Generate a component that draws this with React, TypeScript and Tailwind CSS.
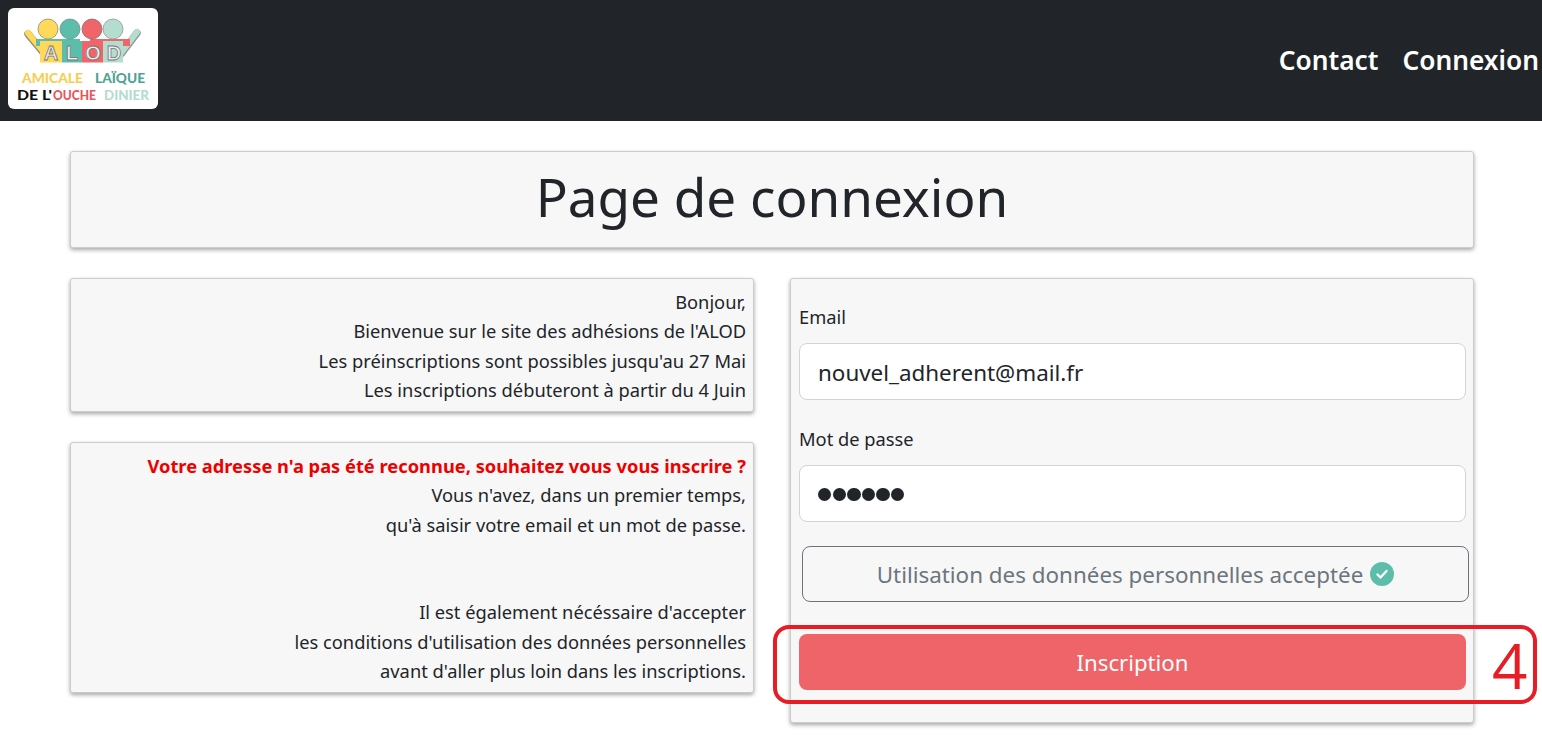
import React from 'react';

const Logo = () => (
  <svg viewBox="0 0 150 101" className="w-full h-full">
    {/* arms */}
    <path d="M20 26 L35 44" stroke="#8f8f80" strokeWidth="7.5" strokeLinecap="round" />
    <path d="M129 25 L113 46" stroke="#8f9a94" strokeWidth="7.5" strokeLinecap="round" />
    <path d="M20 25 L35 43" stroke="#ffd95a" strokeWidth="6" strokeLinecap="round" />
    <path d="M129 24 L113 45" stroke="#b4dccf" strokeWidth="6" strokeLinecap="round" />
    <path d="M28 31 L72 31 L72 38 L28 38 Z" fill="#5cbdaa" />
    <path d="M82 31 L122 31 L122 38 L82 38 Z" fill="#ef6569" />
    {/* bodies */}
    <rect x="32" y="33" width="22" height="21.5" fill="#ffd95a" />
    <rect x="54" y="33" width="20" height="21.5" fill="#5cbdaa" />
    <rect x="74" y="33" width="21" height="21.5" fill="#ef6569" />
    <rect x="95" y="33" width="20" height="21.5" fill="#b4dccf" />
    {/* heads */}
    <circle cx="40" cy="21" r="10" fill="#ffd95a" stroke="#8a8a7a" strokeWidth="0.8" />
    <circle cx="62" cy="21" r="10" fill="#5cbdaa" stroke="#6f8a84" strokeWidth="0.8" />
    <circle cx="84" cy="21" r="10" fill="#ef6569" stroke="#8a6a6a" strokeWidth="0.8" />
    <circle cx="105" cy="21" r="10" fill="#b4dccf" stroke="#8a9a94" strokeWidth="0.8" />
    <g fontFamily="'Liberation Sans', sans-serif" fontWeight="700" fontSize="20" fill="#eeeeee" stroke="#777777" strokeWidth="0.8" textAnchor="middle">
      <text x="43" y="52">A</text>
      <text x="64" y="52">L</text>
      <text x="85" y="52">O</text>
      <text x="106" y="52">D</text>
    </g>
    <g fontFamily="Lato, sans-serif" fontWeight="900" fontSize="12.5">
      <text x="14" y="75" fill="#f5cf55" textLength="61" lengthAdjust="spacingAndGlyphs">AMICALE</text>
      <text x="87" y="75" fill="#4fa394" textLength="50" lengthAdjust="spacingAndGlyphs">LAÏQUE</text>
      <text x="9" y="92" fill="#111111" textLength="35" lengthAdjust="spacingAndGlyphs">DE L'</text>
      <text x="45" y="92" fill="#e8555a" textLength="43" lengthAdjust="spacingAndGlyphs">OUCHE</text>
      <text x="96" y="92" fill="#b4dccf" textLength="45" lengthAdjust="spacingAndGlyphs">DINIER</text>
    </g>
  </svg>
);

const App = () => {
  return (
    <div className="relative h-[752px] overflow-hidden bg-white text-[#212529] font-['Noto_Sans',sans-serif] text-[18.3px] leading-[29.3px]">
      {/* Navbar */}
      <nav className="h-[121px] bg-[#212529] flex items-start justify-between pt-2 pl-2 pr-[3px]">
        <div className="w-[150px] h-[101px] bg-white rounded-md overflow-hidden">
          <Logo />
        </div>
        <div className="flex gap-6 mt-[37px] text-white font-semibold text-[26.3px] leading-[30px]">
          <a>Contact</a>
          <a>Connexion</a>
        </div>
      </nav>

      <div className="px-[68px] pt-[30px]">
        {/* Title */}
        <div className="w-[1404px] ml-[2px] h-[97px] flex items-center justify-center bg-[#f7f7f7] border border-[#cccccc] rounded-[3px] shadow-[0_2px_4px_rgba(0,0,0,0.35)]">
          <h1 className="text-[53px] leading-none font-normal pb-[6px]">Page de connexion</h1>
        </div>

        <div className="ml-[2px] mt-[30px] w-[1404px] flex gap-9 items-start">
          {/* Left column */}
          <div className="w-[684px] flex flex-col gap-[30px]">
            <div className="h-[134px] pt-2 pr-[7px] text-right bg-[#f7f7f7] border border-[#cccccc] rounded-[3px] shadow-[0_2px_4px_rgba(0,0,0,0.35)]">
              <p>Bonjour,</p>
              <p>Bienvenue sur le site des adhésions de l'ALOD</p>
              <p>Les préinscriptions sont possibles jusqu'au 27 Mai</p>
              <p>Les inscriptions débuteront à partir du 4 Juin</p>
            </div>
            <div className="h-[251px] pt-2 pr-[7px] text-right bg-[#f7f7f7] border border-[#cccccc] rounded-[3px] shadow-[0_2px_4px_rgba(0,0,0,0.35)]">
              <p className="font-bold text-[#ee0000]">Votre adresse n'a pas été reconnue, souhaitez vous vous inscrire ?</p>
              <p>Vous n'avez, dans un premier temps,</p>
              <p>qu'à saisir votre email et un mot de passe.</p>
              <p className="h-[58.6px]"></p>
              <p>Il est également nécéssaire d'accepter</p>
              <p>les conditions d'utilisation des données personnelles</p>
              <p>avant d'aller plus loin dans les inscriptions.</p>
            </div>
          </div>

          {/* Login form */}
          <div className="w-[684px] h-[445px] pt-[23px] pl-2 pr-[7px] bg-[#f7f7f7] border border-[#cccccc] rounded-[3px] shadow-[0_2px_4px_rgba(0,0,0,0.35)]">
            <label className="block mb-3">Email</label>
            <div className="h-[57px] flex items-center pt-[2px] px-[18px] bg-white border border-[#ced4da] rounded-lg text-[22.4px]">
              nouvel_adherent@mail.fr
            </div>
            <label className="block mt-6 mb-[11px]">Mot de passe</label>
            <div className="h-[57px] flex items-center pt-[3px] gap-[1.2px] px-[18px] bg-white border border-[#ced4da] rounded-lg">
              {[0, 1, 2, 3, 4, 5].map((i) => (
                <span key={i} className="w-[13.4px] h-[13.4px] rounded-full bg-[#212529]"></span>
              ))}
            </div>
            <div className="ml-[3px] -mr-[3px] mt-6 h-[56px] flex items-center justify-center gap-[7px] border border-[#6c757d] rounded-lg text-[#6c757d] text-[22.4px]">
              <span className="pt-[3px]">Utilisation des données personnelles acceptée</span>
              <svg viewBox="0 0 24 24" className="w-6 h-6">
                <circle cx="12" cy="12" r="12" fill="#5cbdaa" />
                <path d="M7.5 12.5l3 3 6-6.5" fill="none" stroke="white" strokeWidth="2.4" strokeLinecap="round" strokeLinejoin="round" />
              </svg>
            </div>
            <button className="mt-8 w-full h-[56px] pt-[3px] bg-[#ee6468] text-white rounded-lg text-[22.2px]">Inscription</button>
          </div>
        </div>
      </div>

      {/* Annotation */}
      <div className="absolute left-[773px] top-[625px] w-[764px] h-[79px] border-4 border-[#e81c24] rounded-[16px]"></div>
      <div className="absolute left-[1492px] top-[623px] text-[#e81c24] font-['Open_Sans',sans-serif] text-[62px] leading-[84px]">4</div>
    </div>
  );
};

export default App;
